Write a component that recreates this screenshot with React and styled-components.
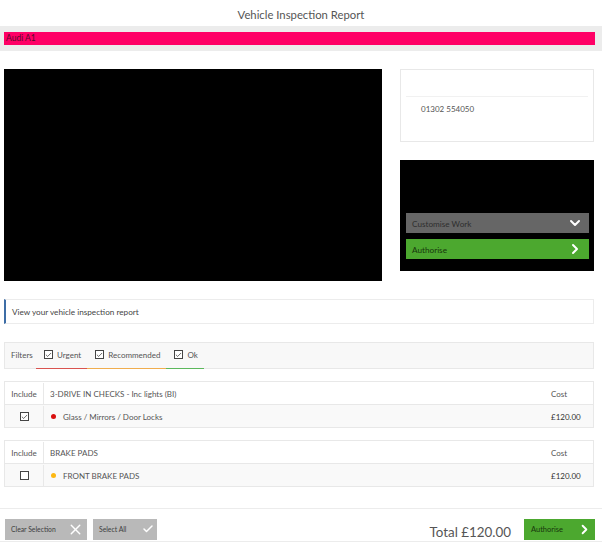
import React from 'react'
import styled, { createGlobalStyle } from 'styled-components'
import { Check, ChevronDown, ChevronRight, X } from 'lucide-react'

const GlobalStyle = createGlobalStyle`
  html, body {
    margin: 0;
    padding: 0;
    background: #fff;
  }
  body {
    font-family: Lato, "Open Sans", "Liberation Sans", sans-serif;
    color: #444;
  }
  * {
    box-sizing: border-box;
  }
`

const Page = styled.div`
  width: 602px;
  height: 544px;
  overflow: hidden;
  display: flex;
  flex-direction: column;
`

const Title = styled.h1`
  height: 26px;
  margin: 0;
  font-size: 11.3px;
  font-weight: 400;
  line-height: 29px;
  text-align: center;
  color: #555;
`

const VehicleBand = styled.div`
  height: 25px;
  padding: 6px 7px 6px 4px;
  background: #ececec;
`

const VehicleName = styled.div`
  height: 13px;
  padding-left: 2px;
  background: #ff0066;
  font-size: 8.5px;
  line-height: 13px;
  color: #5a0a2c;
`

const Content = styled.main`
  display: flex;
  flex-direction: column;
  padding: 18px 8px 0 4px;
`

const Hero = styled.section`
  display: flex;
  justify-content: space-between;
  height: 212px;
`

const VideoPanel = styled.div`
  width: 378px;
  background: #000;
`

const SideColumn = styled.div`
  display: flex;
  flex-direction: column;
  width: 194px;
`

const ContactCard = styled.div`
  height: 73px;
  padding: 26px 5px 0;
  border: 1px solid #e8e8e8;
  margin-bottom: 18px;
`

const Phone = styled.div`
  padding: 6px 0 0 15px;
  border-top: 1px solid #f1f1f1;
  font-size: 8px;
  line-height: 12px;
  color: #555;
`

const ActionPanel = styled.div`
  display: flex;
  flex-direction: column;
  justify-content: flex-end;
  gap: 6px;
  height: 111px;
  padding: 0 5px 12px 6px;
  background: #000;
`

const ActionButton = styled.div`
  display: flex;
  align-items: center;
  justify-content: space-between;
  height: 20px;
  padding: 0 6px 0 6px;
  background: ${(props) => (props.$green ? '#4ca82f' : '#666')};
  color: ${(props) => (props.$green ? '#17360c' : '#2e2e2e')};
  font-size: 8.2px;

  span {
    padding-top: 2px;
  }

  svg {
    color: #fff;
  }
`

const Intro = styled.div`
  height: 25px;
  margin-top: 18px;
  padding-left: 6px;
  border: 1px solid #ececec;
  border-left: 2px solid #3d6da6;
  font-size: 8.2px;
  line-height: 24px;
  color: #444;
`

const Filters = styled.div`
  display: flex;
  align-items: stretch;
  height: 27px;
  margin-top: 18px;
  padding-left: 6px;
  border: 1px solid #e8e8e8;
  background: #f8f8f8;
  font-size: 8px;
  color: #555;
`

const FiltersLabel = styled.span`
  align-self: center;
  width: 25px;
  margin-bottom: 2px;
`

const Filter = styled.div`
  display: flex;
  align-items: center;
  gap: 4px;
  height: 26px;
  padding: 0 6px 2px 8px;
  border-bottom: 1px solid ${(props) => props.$color};
`

const Box = styled.span`
  display: flex;
  align-items: center;
  justify-content: center;
  width: 9px;
  height: 9px;
  border: 1px solid #444;
  background: #fff;
  color: #333;
`

const Table = styled.div`
  margin-top: ${(props) => props.$top}px;
  border: 1px solid #e8e8e8;
  font-size: 8px;
  color: #555;
`

const Row = styled.div`
  display: grid;
  grid-template-columns: 39px 1fr 42px;
  align-items: stretch;
  height: ${(props) => (props.$item ? '23px' : '22px')};
  padding-top: 1px;
  background: ${(props) => (props.$item ? '#f9f9f9' : '#fff')};
  border-top: ${(props) => (props.$item ? '1px solid #e8e8e8' : '0')};
`

const IncludeCell = styled.div`
  display: flex;
  align-items: center;
  justify-content: center;
  border-right: 1px solid #e8e8e8;
`

const TextCell = styled.div`
  display: flex;
  align-items: center;
  gap: 7px;
  padding-left: 6px;
`

const CostCell = styled.div`
  display: flex;
  align-items: center;
  color: ${(props) => (props.$item ? '#333' : '#555')};
`

const Dot = styled.span`
  width: 5px;
  height: 5px;
  margin-left: 1px;
  border-radius: 50%;
  background: ${(props) => props.$color};
`

const Footer = styled.footer`
  display: flex;
  align-items: center;
  height: 34px;
  margin-top: 21px;
  padding: 9px 7px 1px 5px;
  border-top: 1px solid #ececec;
  border-bottom: 1px solid #ececec;
`

const GreyButton = styled.div`
  display: flex;
  align-items: center;
  justify-content: space-between;
  width: ${(props) => props.$width}px;
  height: 21px;
  margin-right: 6px;
  padding: 0 3px 0 6px;
  background: #b9b9b9;
  color: #3e3e3e;
  font-size: 6.8px;

  svg {
    color: #fff;
  }
`

const Total = styled.div`
  margin-left: auto;
  margin-right: 13px;
  padding-top: 6px;
  font-size: 13.4px;
  font-weight: 400;
  color: #555;
`

const FooterAuthorise = styled.div`
  display: flex;
  align-items: center;
  justify-content: space-between;
  width: 71px;
  height: 21px;
  padding: 0 3px 0 7px;
  background: #4ca82f;
  color: #17360c;
  font-size: 7.5px;

  svg {
    color: #fff;
  }
`

const CheckBox = ({ checked }) => (
  <Box>{checked && <Check size={8} strokeWidth={2.5} />}</Box>
)

const App = () => {
  return (
    <Page>
      <GlobalStyle />
      <Title>Vehicle Inspection Report</Title>
      <VehicleBand>
        <VehicleName>Audi A1</VehicleName>
      </VehicleBand>
      <Content>
        <Hero>
          <VideoPanel />
          <SideColumn>
            <ContactCard>
              <Phone>01302 554050</Phone>
            </ContactCard>
            <ActionPanel>
              <ActionButton>
                <span>Customise Work</span>
                <ChevronDown size={16} strokeWidth={3} />
              </ActionButton>
              <ActionButton $green>
                <span>Authorise</span>
                <ChevronRight size={16} strokeWidth={3} />
              </ActionButton>
            </ActionPanel>
          </SideColumn>
        </Hero>
        <Intro>View your vehicle inspection report</Intro>
        <Filters>
          <FiltersLabel>Filters</FiltersLabel>
          <Filter $color="#d9534f">
            <CheckBox checked />
            Urgent
          </Filter>
          <Filter $color="#f0ad4e">
            <CheckBox checked />
            Recommended
          </Filter>
          <Filter $color="#5cb85c">
            <CheckBox checked />
            Ok
          </Filter>
        </Filters>
        <Table $top={12}>
          <Row>
            <IncludeCell>Include</IncludeCell>
            <TextCell>3-DRIVE IN CHECKS - Inc lights (BI)</TextCell>
            <CostCell>Cost</CostCell>
          </Row>
          <Row $item>
            <IncludeCell>
              <CheckBox checked />
            </IncludeCell>
            <TextCell>
              <Dot $color="#d9100f" />
              Glass / Mirrors / Door Locks
            </TextCell>
            <CostCell $item>£120.00</CostCell>
          </Row>
        </Table>
        <Table $top={12}>
          <Row>
            <IncludeCell>Include</IncludeCell>
            <TextCell>BRAKE PADS</TextCell>
            <CostCell>Cost</CostCell>
          </Row>
          <Row $item>
            <IncludeCell>
              <CheckBox />
            </IncludeCell>
            <TextCell>
              <Dot $color="#fdb813" />
              FRONT BRAKE PADS
            </TextCell>
            <CostCell $item>£120.00</CostCell>
          </Row>
        </Table>
      </Content>
      <Footer>
        <GreyButton $width={82}>
          Clear Selection
          <X size={17} strokeWidth={2} />
        </GreyButton>
        <GreyButton $width={64}>
          Select All
          <Check size={12} strokeWidth={3} />
        </GreyButton>
        <Total>Total £120.00</Total>
        <FooterAuthorise>
          Authorise
          <ChevronRight size={15} strokeWidth={3} />
        </FooterAuthorise>
      </Footer>
    </Page>
  )
}

export default App
